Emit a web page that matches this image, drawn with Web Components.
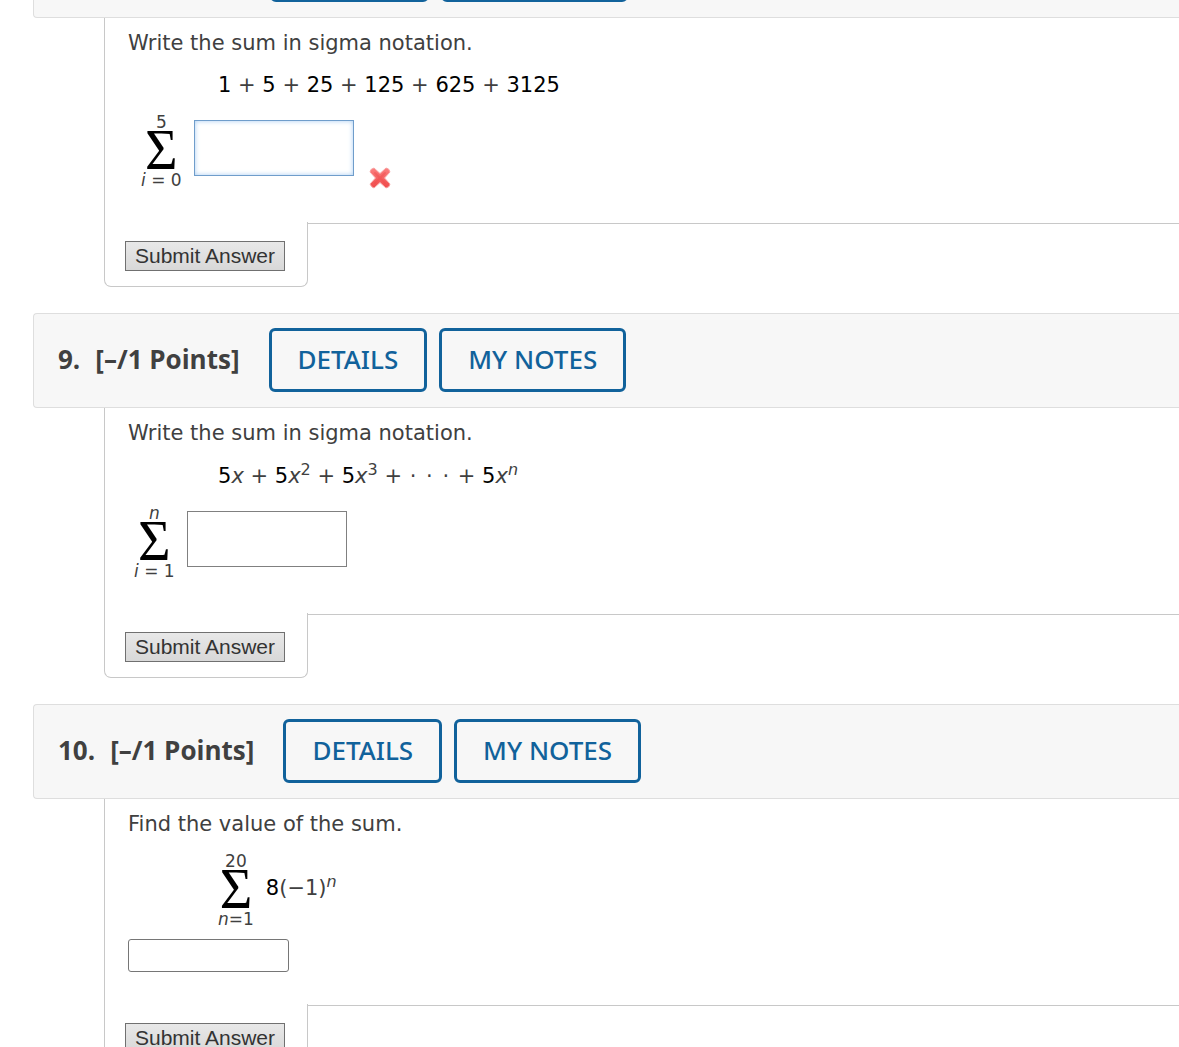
<!DOCTYPE html>
<html lang="en">
<head>
<meta charset="utf-8">
<title>Assignment</title>
<style>
  body {
    margin: 0;
    background: #fff;
    color: #404040;
    font-family: Verdana, "DejaVu Sans", sans-serif;
    font-size: 21px;
    line-height: 30px;
    overflow: hidden;
  }
  b {
    color: #000;
    font-weight: normal;
  }
  sup {
    font-size: 16px;
    line-height: 20px;
    vertical-align: 8px;
  }
</style>
</head>
<body>
<assignment-page>
  <question-card number="8" points="0/1">
    <p slot="prompt">Write the sum in sigma notation.</p>
    <math-line><b>1</b> + <b>5</b> + <b>25</b> + <b>125</b> + <b>625</b> + <b>3125</b></math-line>
    <sum-operator indent="graded">
      <span slot="upper">5</span>
      <span slot="lower"><i>i</i> = 0</span>
      <answer-box kind="math" active label="Summand for question 8"></answer-box>
      <wrong-mark></wrong-mark>
    </sum-operator>
  </question-card>

  <question-card number="9" points="–/1">
    <p slot="prompt">Write the sum in sigma notation.</p>
    <math-line><b>5</b><i>x</i> + <b>5</b><i>x</i><sup>2</sup> + <b>5</b><i>x</i><sup>3</sup> + <math-dot>·</math-dot> <math-dot>·</math-dot> <math-dot>·</math-dot> + <b>5</b><i>x</i><sup><i>n</i></sup></math-line>
    <sum-operator indent="answer">
      <span slot="upper"><i>n</i></span>
      <span slot="lower"><i>i</i> = 1</span>
      <answer-box kind="math" label="Summand for question 9"></answer-box>
    </sum-operator>
  </question-card>

  <question-card number="10" points="–/1">
    <p slot="prompt">Find the value of the sum.</p>
    <sum-operator indent="display">
      <span slot="upper">20</span>
      <span slot="lower"><i>n</i>=1</span>
      <span><b>8</b>(−1)<sup><i>n</i></sup></span>
    </sum-operator>
    <answer-box kind="text" label="Value of the sum"></answer-box>
  </question-card>
</assignment-page>

<script>
class AssignmentPage extends HTMLElement {
  constructor() {
    super();
    const shadow = this.attachShadow({ mode: 'open' });
    // the list is shown scrolled down to the body of its first question
    shadow.innerHTML = `
      <style>
        :host {
          display: flex;
          flex-direction: column;
          gap: 26px;
          margin-top: -77px;
          padding-left: 33px;
        }
      </style>
      <slot></slot>
    `;
  }
}

class QuestionCard extends HTMLElement {
  constructor() {
    super();
    const shadow = this.attachShadow({ mode: 'open' });
    const number = this.getAttribute('number');
    const points = this.getAttribute('points');
    shadow.innerHTML = `
      <style>
        :host {
          display: block;
        }

        header {
          display: flex;
          align-items: center;
          padding: 14px 24px 15px;
          border: 1px solid #dedede;
          border-right: none;
          border-radius: 4px 0 0 4px;
          background: #f7f7f7;
        }

        h2 {
          display: flex;
          gap: 15px;
          margin: 0 29px 0 0;
          padding-bottom: 2px;
          font: 700 26px/36px "Open Sans", sans-serif;
        }

        .actions {
          display: flex;
          gap: 12px;
        }

        .actions button {
          padding: 10px 26px 12px;
          border: 3px solid #11629b;
          border-radius: 6px;
          background: transparent;
          color: #11629b;
          font: 500 26px/36px "Noto Sans", "Open Sans", sans-serif;
          cursor: pointer;
        }

        .content {
          margin-left: 71px;
          padding: 10px 23px 31px;
          border-left: 1px solid #c8c8c8;
          border-bottom: 1px solid #c8c8c8;
        }

        ::slotted(p) {
          margin: 0;
        }

        /* tab that hangs under the question and covers its bottom line */
        footer {
          position: relative;
          width: fit-content;
          margin: -2px 0 0 71px;
          padding: 19px 22px 15px 20px;
          border: 1px solid #c8c8c8;
          border-top: none;
          border-radius: 0 0 7px 7px;
          background: #fff;
        }

        .submit {
          display: block;
          width: 160px;
          padding: 0;
          border: 1px solid #707070;
          border-radius: 0;
          background: linear-gradient(#e8e8e8, #d8d8d8);
          color: #333;
          font: 21px/28px "Liberation Sans", Arial, sans-serif;
          white-space: nowrap;
        }
      </style>
      <header>
        <h2><span>${number}.</span><span>[${points} Points]</span></h2>
        <div class="actions">
          <button type="button">DETAILS</button>
          <button type="button">MY NOTES</button>
        </div>
      </header>
      <div class="content">
        <slot name="prompt"></slot>
        <slot></slot>
      </div>
      <footer>
        <button class="submit" type="submit">Submit Answer</button>
      </footer>
    `;
  }
}

class MathLine extends HTMLElement {
  constructor() {
    super();
    const shadow = this.attachShadow({ mode: 'open' });
    shadow.innerHTML = `
      <style>
        :host {
          display: block;
          margin-top: 12px;
          padding-left: 90px;
        }
      </style>
      <slot></slot>
    `;
  }
}

class MathDot extends HTMLElement {
  constructor() {
    super();
    const shadow = this.attachShadow({ mode: 'open' });
    shadow.innerHTML = `<style>:host { display: inline; padding: 0 2px 0 1px; }</style><slot></slot>`;
  }
}

class SumOperator extends HTMLElement {
  constructor() {
    super();
    const shadow = this.attachShadow({ mode: 'open' });
    shadow.innerHTML = `
      <style>
        :host {
          display: flex;
          align-items: center;
          gap: 12px;
          margin-top: 12px;
        }

        :host([indent="answer"]) { padding-left: 6px; }
        :host([indent="graded"]) { padding-left: 13px; }
        :host([indent="display"]) { padding-left: 90px; }

        .stack {
          display: flex;
          flex-direction: column;
          align-items: center;
          font-size: 17px;
        }

        .upper { line-height: 20px; }
        .lower { line-height: 24px; }

        .sigma {
          color: #000;
          font: 56px/36px "Liberation Serif", "Times New Roman", serif;
        }

        ::slotted(span) {
          white-space: nowrap;
        }

        ::slotted(span:not([slot])) {
          margin-bottom: 8px;
        }
      </style>
      <div class="stack">
        <div class="upper"><slot name="upper"></slot></div>
        <div class="sigma">Σ</div>
        <div class="lower"><slot name="lower"></slot></div>
      </div>
      <slot></slot>
    `;
  }
}

class AnswerBox extends HTMLElement {
  constructor() {
    super();
    const shadow = this.attachShadow({ mode: 'open' });
    const label = this.getAttribute('label');
    shadow.innerHTML = `
      <style>
        :host {
          display: block;
        }

        :host([kind="math"]) { margin-bottom: 8px; }
        :host([kind="text"]) { margin: 8px 0 2px; }

        input {
          display: block;
          box-sizing: border-box;
          width: 160px;
          height: 56px;
          padding: 2px 8px;
          border: 1px solid #808080;
          background: #fff;
          color: #000;
          font: inherit;
          outline: none;
        }

        :host([kind="text"]) input {
          width: 161px;
          height: 33px;
          border-color: #767676;
          border-radius: 3px;
        }

        :host([active]) input {
          border-color: #6f9dcb;
          box-shadow: inset 0 0 5px #a9cdf2;
        }
      </style>
      <input type="text" aria-label="${label}">
    `;
  }
}

class WrongMark extends HTMLElement {
  constructor() {
    super();
    const shadow = this.attachShadow({ mode: 'open' });
    shadow.innerHTML = `
      <style>
        :host {
          display: block;
          align-self: flex-end;
          margin: 0 0 3px 3px;
        }

        svg {
          display: block;
        }
      </style>
      <svg width="22" height="22" viewBox="0 0 22 22" role="img" aria-label="Incorrect">
        <defs>
          <linearGradient id="red" x1="0" y1="0" x2="0" y2="1">
            <stop offset="0" stop-color="#fb8080"/>
            <stop offset="1" stop-color="#ef4a4a"/>
          </linearGradient>
        </defs>
        <path d="M5 1 L11 6.500 L17 1 Q20 1 21 5 L15.500 11 L21 17 Q21 20 17 21 L11 15.500 L5 21 Q2 20 1 17 L6.500 11 L1 5 Q1 2 5 1 Z"
          fill="url(#red)" stroke="#f9a3a3" stroke-width="1" stroke-linejoin="round"/>
        <path d="M6 6 L16 16 M16 6 L6 16" stroke="#f04a4a" stroke-width="2" stroke-linecap="round" opacity="0.4"/>
      </svg>
    `;
  }
}

customElements.define("assignment-page", AssignmentPage);
customElements.define("question-card", QuestionCard);
customElements.define("math-line", MathLine);
customElements.define("math-dot", MathDot);
customElements.define("sum-operator", SumOperator);
customElements.define("answer-box", AnswerBox);
customElements.define("wrong-mark", WrongMark);
</script>
</body>
</html>
